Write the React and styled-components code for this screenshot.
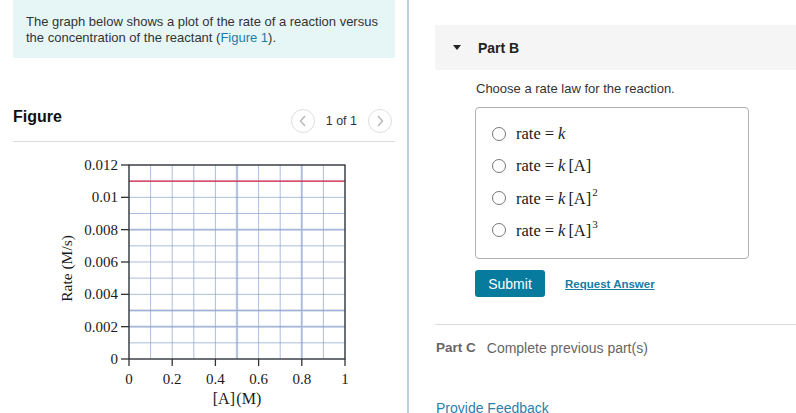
import React from "react";
import styled, { createGlobalStyle } from "styled-components";

const GlobalStyle = createGlobalStyle`
  body {
    margin: 0;
    background: #fff;
    font-family: Arial, "Liberation Sans", sans-serif;
    color: #333;
  }
`;

const Page = styled.div`
  display: flex;
  width: 796px;
  height: 413px;
  overflow: hidden;
`;

const LeftCol = styled.div`
  width: 382px;
  margin-left: 13px;
  flex-shrink: 0;
`;

const Divider = styled.div`
  width: 2px;
  margin-left: 12px;
  background: #b9cfe2;
  flex-shrink: 0;
`;

const RightCol = styled.div`
  flex: 1;
  margin-left: 26px;
  padding-top: 25px;
`;

const InfoBox = styled.div`
  height: 58px;
  box-sizing: border-box;
  background: #e6f6f7;
  padding: 14px 10px 0 13px;
  font-size: 13px;
  line-height: 16px;
  color: #333;
`;

const Link = styled.a`
  color: #1a7fa6;
  text-decoration: none;
`;

const FigureHeader = styled.div`
  display: flex;
  align-items: center;
  justify-content: space-between;
  height: 39px;
  margin-top: 44px;
  border-bottom: 1px solid #dcdcdc;
  padding-right: 3px;
`;

const FigureTitle = styled.h2`
  margin: 0 0 9px;
  font-size: 16px;
  font-weight: bold;
  color: #111;
`;

const Pager = styled.div`
  display: flex;
  align-items: center;
  gap: 11px;
  font-size: 12.5px;
  color: #333;
  padding-bottom: 2px;
`;

const PagerButton = styled.span`
  width: 22px;
  height: 22px;
  border: 1px solid #dedede;
  border-radius: 50%;
  display: flex;
  align-items: center;
  justify-content: center;
`;

const Chevron = ({ dir }) => (
  <svg width="10" height="12" viewBox="0 0 10 12">
    <path
      d={dir === "left" ? "M7 1 L2.5 6 L7 11" : "M3 1 L7.5 6 L3 11"}
      fill="none"
      stroke="#b5b5b5"
      strokeWidth="1.4"
    />
  </svg>
);

const ChartWrap = styled.div`
  display: block;
`;

const PartHeader = styled.div`
  display: flex;
  align-items: center;
  gap: 17px;
  height: 45px;
  padding-left: 18px;
  background: #f5f5f5;
  font-size: 14px;
  font-weight: bold;
  color: #222;
`;

const Triangle = styled.span`
  width: 0;
  height: 0;
  border-left: 4.5px solid transparent;
  border-right: 4.5px solid transparent;
  border-top: 5px solid #222;
`;

const PartBody = styled.div`
  padding-left: 40px;
`;

const Prompt = styled.p`
  margin: 11px 0 0 1px;
  font-size: 13px;
  line-height: 16px;
  color: #333;
`;

const Options = styled.div`
  width: 274px;
  height: 152px;
  box-sizing: border-box;
  margin-top: 10px;
  border: 1px solid #b0b0b0;
  border-radius: 4px;
  padding: 10px 0 0 16px;
`;

const Option = styled.label`
  display: flex;
  align-items: center;
  gap: 10px;
  height: 32px;
`;

const Radio = styled.span`
  width: 12px;
  height: 12px;
  border: 1px solid #777;
  border-radius: 50%;
  flex-shrink: 0;
`;

const Math = styled.span`
  font-family: "Liberation Serif", "DejaVu Serif", serif;
  font-size: 16.5px;
  color: #1a1a1a;
  white-space: nowrap;
  i { font-style: italic; margin-right: 3px; }
  sup { font-size: 11px; position: relative; top: -1px; margin-left: 1px; }
`;

const Eq = styled.span`
  margin: 0 4px;
`;

const Actions = styled.div`
  display: flex;
  align-items: center;
  gap: 20px;
  margin-top: 11px;
`;

const SubmitButton = styled.button`
  width: 70px;
  height: 27px;
  border: none;
  border-radius: 3px;
  background: #067b9d;
  color: #fff;
  font-family: Arial, "Liberation Sans", sans-serif;
  font-size: 14px;
  padding: 0;
`;

const RequestLink = styled.a`
  font-size: 11.5px;
  font-weight: bold;
  color: #1a7ba3;
  text-decoration: underline;
`;

const PartC = styled.div`
  margin-top: 27px;
  border-top: 1px solid #dedede;
  padding: 15px 0 0 1px;
  display: flex;
  gap: 11px;
  font-size: 14px;
  line-height: 16px;
  color: #666;
  b { font-size: 13.5px; color: #666; }
`;

const Feedback = styled.a`
  display: block;
  margin-top: 44px;
  margin-left: 1px;
  font-size: 14px;
  color: #2a7fab;
  text-decoration: none;
`;

// chart geometry in local svg coords (svg starts at page x=13, y=142)
const X0 = 116;
const X1 = 332;
const Y0 = 217;
const Y1 = 23;
const xs = (v) => X0 + (v / 1) * (X1 - X0);
const ys = (v) => Y0 - (v / 0.012) * (Y0 - Y1);

const near = (a, b) => (a > b ? a - b : b - a) < 1e-9;

const Chart = () => {
  const vx = Array.from({ length: 11 }, (_, i) => i / 10);
  const hy = Array.from({ length: 13 }, (_, i) => i * 0.001);
  const thickX = [0.5, 0.8];
  const thickY = [0.008, 0.003, 0.002];
  const yLabels = ["0", "0.002", "0.004", "0.006", "0.008", "0.01", "0.012"];
  const xLabels = ["0", "0.2", "0.4", "0.6", "0.8", "1"];
  const font = "'Liberation Serif', 'DejaVu Serif', serif";
  return (
    <svg width="382" height="271" viewBox="0 0 382 271">
      {vx.map((v) =>
        thickX.some((t) => near(t, v)) ? (
          <line key={"tx" + v} x1={xs(v)} x2={xs(v)} y1={Y1} y2={Y0} stroke="#d3d9ea" strokeWidth="2.5" />
        ) : null
      )}
      {hy.map((v, i) =>
        thickY.some((t) => near(t, v)) ? (
          <line key={"ty" + i} x1={X0} x2={X1} y1={ys(v)} y2={ys(v)} stroke="#d3d9ea" strokeWidth="2.5" />
        ) : null
      )}
      {vx.map((v) => (
        <line key={"vx" + v} x1={xs(v)} x2={xs(v)} y1={Y1} y2={Y0} stroke="#8aa2cf" strokeWidth="0.7" />
      ))}
      {hy.map((v, i) => (
        <line key={"hy" + i} x1={X0} x2={X1} y1={ys(v)} y2={ys(v)} stroke="#8aa2cf" strokeWidth="0.7" />
      ))}
      <line x1={X0} x2={X1} y1={ys(0.011)} y2={ys(0.011)} stroke="#de2443" strokeWidth="1.3" />
      <rect x={X0} y={Y1} width={X1 - X0} height={Y0 - Y1} fill="none" stroke="#333" strokeWidth="1.3" />
      {yLabels.map((l, i) => (
        <g key={"yl" + l}>
          <line x1={X0 - 8} x2={X0} y1={ys(i * 0.002)} y2={ys(i * 0.002)} stroke="#333" strokeWidth="1.3" />
          <text x={X0 - 11} y={ys(i * 0.002) + 5} textAnchor="end" fontFamily={font} fontSize="15" fill="#1a1a1a">
            {l}
          </text>
        </g>
      ))}
      {xLabels.map((l, i) => (
        <g key={"xl" + l}>
          <line x1={xs(i * 0.2)} x2={xs(i * 0.2)} y1={Y0} y2={Y0 + 7} stroke="#333" strokeWidth="1.3" />
          <text x={xs(i * 0.2)} y={Y0 + 25} textAnchor="middle" fontFamily={font} fontSize="15" fill="#1a1a1a">
            {l}
          </text>
        </g>
      ))}
      <text x={(X0 + X1) / 2} y={Y0 + 45} textAnchor="middle" fontFamily={font} fontSize="16" fill="#1a1a1a">
        [A]&#8202;(M)
      </text>
      <text
        transform={`translate(59 ${ys(0.0056)}) rotate(-90)`}
        textAnchor="middle"
        fontFamily={font}
        fontSize="15.5"
        fill="#1a1a1a"
      >
        Rate (M/s)
      </text>
    </svg>
  );
};

const options = [
  <>rate<Eq>=</Eq><i>k</i></>,
  <>rate<Eq>=</Eq><i>k</i>[A]</>,
  <>rate<Eq>=</Eq><i>k</i>[A]<sup>2</sup></>,
  <>rate<Eq>=</Eq><i>k</i>[A]<sup>3</sup></>,
];

export default function App() {
  return (
    <>
      <GlobalStyle />
      <Page>
        <LeftCol>
          <InfoBox>
            The graph below shows a plot of the rate of a reaction versus the concentration of the
            reactant (<Link href="#">Figure 1</Link>).
          </InfoBox>
          <FigureHeader>
            <FigureTitle>Figure</FigureTitle>
            <Pager>
              <PagerButton>
                <Chevron dir="left" />
              </PagerButton>
              <span>1 of 1</span>
              <PagerButton>
                <Chevron dir="right" />
              </PagerButton>
            </Pager>
          </FigureHeader>
          <ChartWrap>
            <Chart />
          </ChartWrap>
        </LeftCol>
        <Divider />
        <RightCol>
          <PartHeader>
            <Triangle />
            <span>Part B</span>
          </PartHeader>
          <PartBody>
            <Prompt>Choose a rate law for the reaction.</Prompt>
            <Options>
              {options.map((o, i) => (
                <Option key={i}>
                  <Radio />
                  <Math>{o}</Math>
                </Option>
              ))}
            </Options>
            <Actions>
              <SubmitButton>Submit</SubmitButton>
              <RequestLink href="#">Request Answer</RequestLink>
            </Actions>
          </PartBody>
          <PartC>
            <b>Part C</b>
            <span>Complete previous part(s)</span>
          </PartC>
          <Feedback href="#">Provide Feedback</Feedback>
        </RightCol>
      </Page>
    </>
  );
}
